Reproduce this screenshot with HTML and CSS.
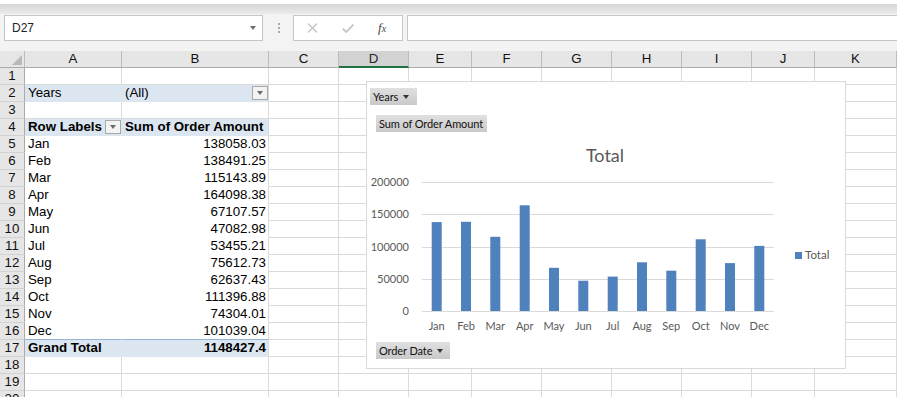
FILE: index.html
```html
<!DOCTYPE html>
<html lang="en"><head>
  <meta charset="UTF-8">
  <meta name="viewport" content="width=device-width, initial-scale=1.0">
  <title>Order Amount by Month</title>
  <link rel="stylesheet" href="styles.css">
</head>
<body>

<!-- BARRA DE FORMULA -->
<div class="top-edge"></div>
<div class="ribbon-shadow"></div>
<div class="formula-bar">
  <div class="name-box"><span>D27</span><span class="caret"></span></div>
  <div class="grip"></div>
  <div class="fx-box">
    <svg width="11" height="10" viewBox="0 0 11 10"><path d="M1 0.5L10 9.5M10 0.5L1 9.5" stroke="#c4c4c4" stroke-width="1.4" fill="none"/></svg>
    <svg width="12" height="9" viewBox="0 0 12 9"><path d="M0.8 4.6L4.3 8L11.3 0.6" stroke="#c4c4c4" stroke-width="1.8" fill="none"/></svg>
    <span class="fx"><i>f</i><i class="fx-x">x</i></span>
  </div>
  <div class="formula-input"></div>
</div>

<!-- PLANILHA -->
<div class="sheet">
  <div class="grid" id="grid"></div>

  <div class="chart">
    <div class="field-btn btn-years">Years<span class="tri"></span></div>
    <div class="field-btn btn-sum">Sum of Order Amount</div>
    <div class="field-btn btn-date">Order Date<span class="tri"></span></div>
    <svg id="plot" width="478" height="286"></svg>
  </div>
</div>

<script>
  const months = [
    ["Jan", "138058.03"], ["Feb", "138491.25"], ["Mar", "115143.89"], ["Apr", "164098.38"],
    ["May", "67107.57"], ["Jun", "47082.98"], ["Jul", "53455.21"], ["Aug", "75612.73"],
    ["Sep", "62637.43"], ["Oct", "111396.88"], ["Nov", "74304.01"], ["Dec", "101039.04"]
  ];
  const cols = ["A", "B", "C", "D", "E", "F", "G", "H", "I", "J", "K"];

  function cell(r, c) {
    if (c === "A" || c === "B") {
      const a = c === "A";
      if (r === 2) {
        return a ? '<div class="c fill fa">Years</div>'
                 : '<div class="c fill drop-cell">(All)<span class="drop"></span></div>';
      }
      if (r === 4) {
        return a ? '<div class="c fill fa bold drop-cell">Row Labels<span class="drop"></span></div>'
                 : '<div class="c fill bold">Sum of Order Amount</div>';
      }
      if (r >= 5 && r <= 16) {
        const m = months[r - 5];
        const last = r === 16 ? " last" : "";
        return a ? `<div class="c body fa${last}">${m[0]}</div>`
                 : `<div class="c body num${last}">${m[1]}</div>`;
      }
      if (r === 17) {
        return a ? '<div class="c fill fa bold">Grand Total</div>'
                 : '<div class="c fill bold num">1148427.4</div>';
      }
    }
    return '<div class="c"></div>';
  }

  let html = '<div class="corner"><span class="corner-tri"></span></div>';
  cols.forEach(c => html += `<div class="ch${c === "D" ? " sel" : ""}">${c}</div>`);
  for (let r = 1; r <= 20; r++) {
    html += `<div class="rh">${r}</div>`;
    cols.forEach(c => html += cell(r, c));
  }
  document.getElementById("grid").innerHTML = html;

  // grafico
  const x0 = 55, x1 = 407, y0 = 229, step = 32.2;
  const cw = (x1 - x0) / 12;
  let svg = "";
  for (let i = 0; i <= 4; i++) {
    const y = Math.round(y0 - i * step) + 0.5;
    svg += `<line x1="${x0}" x2="${x1}" y1="${y}" y2="${y}" class="gridline"/>`;
    svg += `<text x="42" y="${y + 3.5}" class="tick" text-anchor="end">${i * 50000}</text>`;
  }
  months.forEach(([m, v], i) => {
    const h = parseFloat(v) / 200000 * step * 4;
    const cx = x0 + cw * i + cw / 2;
    svg += `<rect x="${(cx - 5).toFixed(1)}" y="${(y0 - h).toFixed(1)}" width="10" height="${h.toFixed(1)}" class="bar"/>`;
    svg += `<text x="${cx.toFixed(1)}" y="248" class="tick" text-anchor="middle">${m}</text>`;
  });
  svg += '<text x="238" y="80" class="title" text-anchor="middle">Total</text>';
  svg += '<rect x="428" y="170" width="7" height="7" class="bar"/>';
  svg += '<text x="438" y="177" class="tick legend">Total</text>';
  document.getElementById("plot").innerHTML = svg;
</script>

</body></html>
```

FILE: styles.css
```css
* { margin: 0; padding: 0; box-sizing: border-box; }

body {
  width: 897px;
  height: 397px;
  overflow: hidden;
  font-family: 'Liberation Sans', Arial, sans-serif;
  background: #fff;
  color: #000;
}

.top-edge { height: 4px; background: #fff; }
.ribbon-shadow { height: 10px; background: linear-gradient(#d6d6d6, #ebebeb); }

.formula-bar {
  height: 37px;
  background: #f3f3f3;
  display: flex;
  align-items: flex-start;
  padding: 1px 0 0 4px;
}

.name-box {
  width: 259px;
  height: 26px;
  background: #fff;
  border: 1px solid #c6c6c6;
  display: flex;
  align-items: center;
  justify-content: space-between;
  padding: 0 6px 0 7px;
  font-size: 12px;
  color: #222;
}

.caret {
  width: 0;
  height: 0;
  border-top: 4px solid #6e6e6e;
  border-left: 3.5px solid transparent;
  border-right: 3.5px solid transparent;
}

.grip {
  width: 2px;
  height: 10px;
  margin: 8px 13px 0 15px;
  background: repeating-linear-gradient(#a8a8a8 0 2px, transparent 2px 4px);
}

.fx-box {
  width: 110px;
  height: 26px;
  background: #fff;
  border: 1px solid #c6c6c6;
  display: flex;
  align-items: center;
  gap: 24px;
  padding-left: 13px;
}

.fx {
  font-family: 'Liberation Serif', serif;
  font-size: 13px;
  color: #444;
  white-space: nowrap;
}
.fx-x { font-size: 10px; }

.formula-input {
  flex: 1;
  height: 26px;
  margin-left: 4px;
  background: #fff;
  border: 1px solid #c6c6c6;
  border-right: none;
}

.sheet { position: relative; }

.grid {
  display: grid;
  grid-template-columns: 25px 97px 147px 70px 70px 63px 70px 70px 70px 70px 63px 1fr;
  grid-auto-rows: 17px;
  font-size: 13.3px;
  line-height: 16px;
}

.corner, .ch, .rh {
  background: #e6e6e6;
  border-right: 1px solid #bdbdbd;
  border-bottom: 1px solid #ababab;
}

.corner { position: relative; }
.corner-tri {
  position: absolute;
  right: 2px;
  bottom: 2px;
  width: 0;
  height: 0;
  border-left: 10px solid transparent;
  border-bottom: 10px solid #b8b8b8;
}

.ch { text-align: center; color: #111; }
.ch.sel {
  background: #d2d2d2;
  border-bottom: 2px solid #217346;
  color: #262626;
}

.rh {
  text-align: center;
  border-right-color: #ababab;
  border-bottom-color: #d2d2d2;
  color: #111;
}

.c {
  border-right: 1px solid #dadada;
  border-bottom: 1px solid #dadada;
  padding: 0 2px 0 3px;
  white-space: nowrap;
  overflow: hidden;
}

.bold { font-weight: bold; }
.num { text-align: right; }

.fill { background: #dce6f1; border-bottom-color: #dce6f1; }
.fill.fa { border-right-color: #dce6f1; }
.body { border-bottom-color: #fff; }
.body.fa { border-right-color: #fff; }
.body.last { border-bottom-color: #95b3d7; }

.drop-cell {
  display: flex;
  align-items: center;
  justify-content: space-between;
  padding-right: 0;
}

.drop {
  flex: none;
  width: 16px;
  height: 14px;
  border: 1px solid #a9a9a9;
  background: #f3f3f3;
  display: flex;
  align-items: center;
  justify-content: center;
}
.drop::after {
  content: "";
  border-top: 4px solid #6b6b6b;
  border-left: 3.5px solid transparent;
  border-right: 3.5px solid transparent;
}

.chart {
  position: absolute;
  left: 366px;
  top: 30px;
  width: 480px;
  height: 288px;
  background: #fff;
  border: 1px solid #d9d9d9;
}

#plot { display: block; font-family: Lato, 'Noto Sans', sans-serif; }

.gridline { stroke: #d9d9d9; stroke-width: 1; }
.bar { fill: #4f81bd; }
.tick { font-size: 11px; fill: #595959; }
.legend { font-size: 11.5px; }
.title { font-size: 18px; fill: #595959; }

.field-btn {
  position: absolute;
  height: 17px;
  display: flex;
  align-items: center;
  gap: 5px;
  padding: 0 3px;
  background: linear-gradient(#e0e0e0, #c9c9c9);
  font-family: Lato, 'Noto Sans', sans-serif;
  font-size: 11px;
  letter-spacing: -0.1px;
  color: #111;
  white-space: nowrap;
}

.btn-years { left: 3px; top: 6px; width: 47px; }
.btn-sum { left: 9px; top: 33px; width: 111px; }
.btn-date { left: 9px; top: 260px; width: 74px; }

.tri {
  border-top: 4px solid #333;
  border-left: 3px solid transparent;
  border-right: 3px solid transparent;
}
```
